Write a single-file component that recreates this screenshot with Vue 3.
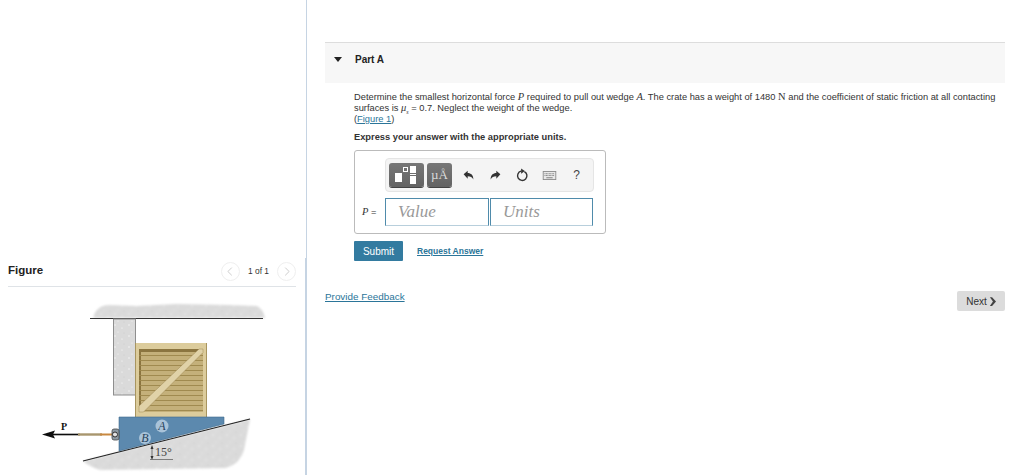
<template>
  <div class="page">
    <aside class="figure-pane">
      <div class="figure-panel">
        <div class="figure-head">
          <span class="figure-title">Figure</span>
          <div class="pager">
            <button class="round-btn">
              <svg viewBox="0 0 20 20" fill="none" stroke="#c4c4c4" stroke-width="1.3">
                <path d="M12 4l-6 6 6 6" />
              </svg>
            </button>
            <span class="pager-text">1 of 1</span>
            <button class="round-btn">
              <svg viewBox="0 0 20 20" fill="none" stroke="#c4c4c4" stroke-width="1.3">
                <path d="M8 4l6 6-6 6" />
              </svg>
            </button>
          </div>
        </div>
        <svg class="diagram" viewBox="0 0 305 187" width="305" height="187">
          <defs>
            <pattern id="speck" width="14" height="11" patternUnits="userSpaceOnUse">
              <rect width="14" height="11" fill="#dadada" />
              <circle cx="3" cy="2" r=".7" fill="#fafafa" />
              <circle cx="10" cy="5" r=".6" fill="#fff" />
              <circle cx="6" cy="9" r=".6" fill="#f6f6f6" />
              <circle cx="12" cy="10" r=".4" fill="#bdbdbd" />
            </pattern>
            <filter id="soft" x="-5%" y="-5%" width="110%" height="110%">
              <feGaussianBlur stdDeviation="0.45" />
            </filter>
            <filter id="fuzzy" x="-5%" y="-20%" width="110%" height="140%">
              <feGaussianBlur stdDeviation="1" />
            </filter>
          </defs>

          <path d="M93 28q2-11 14-13l30 1 40-2 50 1 30 1q6 3 8 12z" fill="url(#speck)" filter="url(#fuzzy)" />
          <path d="M83 171L250 129L244 160Q240 174 226 178L100 180Q90 177 83 171z" fill="url(#speck)" filter="url(#fuzzy)" />

          <g filter="url(#soft)">
            <path d="M90 28.500h173" stroke="#333" stroke-width="1" />
            <rect x="113.500" y="29" width="22" height="76" fill="url(#speck)" stroke="#8e8e8e" stroke-width="1" />

            <rect x="135" y="53" width="72" height="75" fill="#dccc9c" />
            <rect x="135" y="53" width="1" height="75" fill="#a8955f" />
            <rect x="206" y="53" width="1" height="75" fill="#a8955f" />
            <rect x="139" y="59" width="64" height="63" fill="#c4b07a" />
            <rect x="139" y="59" width="64" height="3" fill="#8b7440" />
            <rect x="139" y="59" width="2" height="63" fill="#8b7440" />
            <g stroke="#9c864c" stroke-width=".9">
              <path d="M139 65.500h64M139 70.500h64M139 75.500h64M139 80.500h64M139 85.500h64M139 90.500h64M139 95.500h64M139 100.500h64M139 105.500h64M139 110.500h64M139 115.500h64M139 120.500h64" />
            </g>
            <path d="M139 116L199 59h4v3.500L143.500 122h-4.500z" fill="#e0d2a8" stroke="#8f7a45" stroke-width=".4" />

            <path d="M83 171L250 129" stroke="#222" stroke-width="1.200" />
            <path d="M119 127H224V134L119 161z" fill="#5b89ae" stroke="#3f6a8d" stroke-width=".6" />
            <circle cx="162" cy="136" r="6.500" fill="#a9c3d9" />
            <circle cx="145" cy="148" r="6" fill="#a9c3d9" />

            <path d="M152 157v11" stroke="#333" stroke-width=".6" />
            <path d="M152 155l-1.500 4h3zM152 170l-1.500-4h3z" fill="#333" />
            <path d="M150 169.500h23" stroke="#555" stroke-width=".7" />

            <path d="M42 144.500l13-4-2 4 2 4z" fill="#111" />
            <path d="M52 144.500h28" stroke="#111" stroke-width="1.600" />
            <path d="M78 144.500h24" stroke="#a8966e" stroke-width="2.400" />
            <path d="M100 144.500h12" stroke="#c8883f" stroke-width="2" />
            <rect x="112" y="139" width="7" height="11" rx="2" fill="#8d9aa3" stroke="#444" stroke-width=".8" />
            <circle cx="115" cy="144.500" r="2.500" fill="#e2e2e2" stroke="#333" stroke-width="1" />
          </g>

          <text x="162" y="140" class="fig-letter">A</text>
          <text x="145" y="152" class="fig-letter">B</text>
          <text x="155" y="166" class="fig-angle">15°</text>
          <text x="61" y="140" class="fig-p">P</text>
        </svg>
      </div>
    </aside>

    <main class="content">
      <section class="part">
        <div class="part-head">
          <span class="caret"></span>
          <span class="part-title">Part A</span>
        </div>
        <div class="part-body">
          <p class="question">
            Determine the smallest horizontal force <i class="math">P</i> required to pull out wedge <i class="math">A</i>. The crate has a weight of 1480 <span class="math upright">N</span> and the coefficient of static friction at all contacting<br />
            surfaces is <i class="math">μ<sub>s</sub></i> = 0.7. Neglect the weight of the wedge.<br />
            (<a class="link">Figure 1</a>)
          </p>
          <p class="express">Express your answer with the appropriate units.</p>
          <div class="answer-box">
            <div class="toolbar">
              <button class="tool-btn templates">
                <svg viewBox="0 0 35 24" width="35" height="24">
                  <rect x="6" y="10" width="7" height="9" fill="#fff" />
                  <rect x="14.500" y="4.500" width="4" height="4" fill="none" stroke="#fff" stroke-width="1" />
                  <rect x="21" y="3" width="6" height="7" fill="#fff" />
                  <rect x="21" y="11" width="6" height="1" fill="#fff" />
                  <rect x="21" y="13" width="6" height="8" fill="#fff" />
                </svg>
              </button>
              <button class="tool-btn units">µÅ</button>
              <svg class="tool-icon" viewBox="0 0 16 16" width="27" height="13">
                <path d="M2 6.500L7 2v3c4 0 7 2.500 7 8-1.500-3-3.500-4-7-4v3z" fill="#333" />
              </svg>
              <svg class="tool-icon" viewBox="0 0 16 16" width="27" height="13">
                <path d="M14 6.500L9 2v3c-4 0-7 2.500-7 8 1.500-3 3.500-4 7-4v3z" fill="#333" />
              </svg>
              <svg class="tool-icon" viewBox="0 0 16 16" width="27" height="15" fill="none">
                <path d="M10 3.800A5 5 0 1 1 6.500 3.400" stroke="#333" stroke-width="1.500" />
                <path d="M6.500 .5L10.500 3.200 6.500 6z" fill="#333" />
              </svg>
              <svg class="tool-icon" viewBox="0 0 15 10" width="27" height="9">
                <rect x=".5" y=".5" width="14" height="9" fill="#e8e8e8" stroke="#8a8a8a" />
                <path d="M2 3h11M2 5h11" stroke="#777" stroke-dasharray="1 .6" />
                <path d="M4 7.500h7" stroke="#777" />
              </svg>
              <span class="help">?</span>
            </div>
            <div class="input-row">
              <span class="label"><i class="math">P</i> =</span>
              <div class="field">Value</div>
              <div class="field">Units</div>
            </div>
          </div>
          <div class="actions">
            <button class="submit">Submit</button>
            <a class="link request">Request Answer</a>
          </div>
        </div>
      </section>
      <div class="footer">
        <a class="link feedback">Provide Feedback</a>
        <button class="next">Next
          <svg viewBox="0 0 8 10" width="7" height="9"><path d="M1 0h2.500L8 5l-4.500 5H1l3.500-5z" fill="#444" /></svg>
        </button>
      </div>
    </main>
  </div>
</template>

<script setup>
</script>

<style>
body {
  background: #fff;
}
</style>

<style scoped>
.page {
  display: flex;
  width: 1024px;
  height: 475px;
  overflow: hidden;
  font-family: "Liberation Sans", Arial, sans-serif;
  color: #333;
}

.figure-pane {
  width: 307px;
  height: 475px;
  box-sizing: border-box;
  border-right: 1px solid #c6d4e3;
  padding-top: 258px;
  flex-shrink: 0;
}

.figure-panel {
  height: 217px;
  border-right: 1px solid #c6d4e3;
}

.figure-head {
  width: 288px;
  margin-left: 8px;
  box-sizing: border-box;
  height: 29px;
  border-bottom: 1px solid #dfe3e7;
  display: flex;
  align-items: center;
  justify-content: space-between;
  padding-bottom: 4px;
}

.figure-title {
  font-size: 11.500px;
  font-weight: bold;
  color: #222;
}

.pager {
  display: flex;
  align-items: center;
  gap: 8px;
  margin-top: 2px;
}

.round-btn {
  width: 19px;
  height: 19px;
  padding: 0;
  border: 1px solid #efefef;
  border-radius: 50%;
  background: #fff;
  display: flex;
  align-items: center;
  justify-content: center;
}

.round-btn svg {
  width: 13px;
  height: 13px;
}

.pager-text {
  font-size: 8.400px;
  color: #333;
}

.diagram {
  display: block;
  margin-top: 3px;
}

.fig-letter {
  font: italic 12px "Liberation Serif", serif;
  fill: #26425c;
  text-anchor: middle;
}

.fig-angle {
  font: 12px "Liberation Serif", serif;
  fill: #444;
}

.fig-p {
  font: bold 10px "Liberation Serif", serif;
  fill: #111;
}

.content {
  flex: 1;
  padding: 42px 19px 0 18px;
  min-width: 0;
}

.part {
  border-top: 1px solid #ddd;
}

.part-head {
  height: 40px;
  background: #f7f7f7;
  display: flex;
  align-items: center;
  padding-left: 9px;
  box-sizing: border-box;
  padding-bottom: 7px;
}

.caret {
  width: 0;
  height: 0;
  border-left: 4px solid transparent;
  border-right: 4px solid transparent;
  border-top: 5px solid #222;
  margin-right: 13px;
}

.part-title {
  font-size: 10px;
  font-weight: bold;
  color: #222;
}

.part-body {
  padding: 9px 0 0 29px;
}

.question {
  margin: 0;
  font-size: 9.300px;
  line-height: 11px;
  color: #333;
  white-space: nowrap;
}

.math {
  font-family: "Liberation Serif", serif;
  font-size: 10.500px;
  line-height: 0;
}

.upright {
  font-style: normal;
}

.math sub {
  font-size: 6px;
  line-height: 0;
}

.link {
  color: #2b7599;
  text-decoration: underline;
}

.express {
  margin: 7px 0 0;
  font-size: 9.300px;
  font-weight: bold;
  line-height: 11px;
  color: #333;
}

.answer-box {
  box-sizing: border-box;
  width: 252px;
  height: 84px;
  margin-top: 7px;
  border: 1px solid #bbb;
  border-radius: 3px;
  padding: 7px 11px 0 30px;
}

.toolbar {
  width: 209px;
  height: 34px;
  box-sizing: border-box;
  background: #f4f4f4;
  border: 1px solid #e5e5e5;
  border-radius: 4px;
  display: flex;
  align-items: center;
  padding-left: 3px;
}

.tool-btn {
  height: 24px;
  padding: 0;
  border: none;
  border-radius: 3px;
  background: linear-gradient(#777, #636363);
  box-shadow: 0 1px 0 #444;
  display: flex;
  align-items: center;
  justify-content: center;
}

.templates {
  width: 35px;
}

.units {
  width: 25px;
  margin-left: 3px;
  margin-right: 3px;
  color: #dcdcdc;
  font: 13px "Liberation Serif", serif;
}

.tool-icon {
  flex-shrink: 0;
}

.help {
  width: 27px;
  text-align: center;
  font-size: 12px;
  color: #444;
}

.input-row {
  display: flex;
  align-items: center;
  margin-top: 6px;
  margin-left: -23px;
}

.label {
  width: 23px;
  font-size: 9.300px;
  color: #333;
  white-space: nowrap;
}

.field {
  box-sizing: border-box;
  width: 104px;
  height: 28px;
  border: 1px solid #4f8bab;
  border-bottom-color: #b8cfdc;
  font: italic 17px "Liberation Serif", serif;
  color: #999;
  padding: 3px 0 0 12px;
  background: #fff;
}

.field + .field {
  margin-left: 1px;
  width: 103px;
}

.actions {
  display: flex;
  align-items: center;
  margin-top: 7px;
}

.submit {
  width: 49px;
  height: 20px;
  padding: 0;
  border: none;
  border-radius: 1px;
  background: #337ba0;
  color: #fff;
  font: 10px "Liberation Sans", Arial, sans-serif;
}

.request {
  margin-left: 14px;
  font-size: 8.500px;
  font-weight: bold;
}

.footer {
  display: flex;
  justify-content: space-between;
  align-items: flex-start;
  margin-top: 30px;
}

.feedback {
  font-size: 9.900px;
  line-height: 12px;
}

.next {
  width: 48px;
  height: 20px;
  padding: 0;
  border: none;
  border-radius: 2px;
  background: #dcdcdc;
  color: #333;
  font: 10px "Liberation Sans", Arial, sans-serif;
  display: flex;
  align-items: center;
  justify-content: center;
  gap: 2px;
}
</style>
